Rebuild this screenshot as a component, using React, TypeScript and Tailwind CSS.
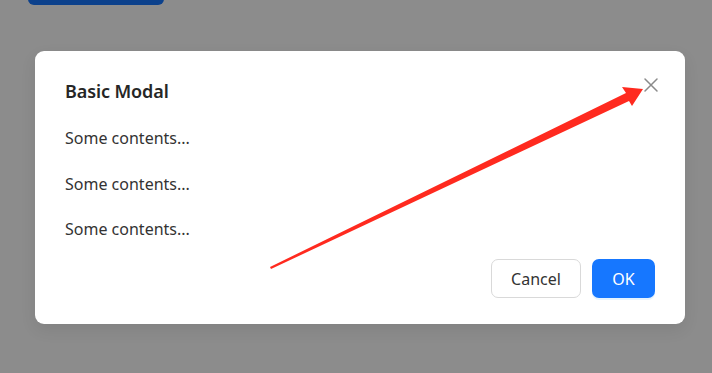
import React from "react";

export default function App() {
  return (
    <div
      className="relative w-[712px] h-[373px] overflow-hidden bg-[#8c8c8c]"
      style={{ fontFamily: '"Noto Sans", "Open Sans", sans-serif' }}
    >
      <div className="absolute left-[28px] top-[-30px] w-[136px] h-[35px] rounded-[6px] bg-[#0c418c]" />
      <div className="absolute left-[35px] top-[51px] w-[650px] h-[273px] rounded-[9px] bg-white shadow-[0_6px_16px_rgba(0,0,0,0.08)] flex flex-col px-[30px] pt-[26px] pb-[26px]">
        <div className="flex items-start justify-between">
          <div className="text-[18px] font-semibold text-[#262626] leading-[28px] tracking-[-0.1px]">Basic Modal</div>
          <svg className="mt-[0px] mr-[-4px]" width="16" height="16" viewBox="0 0 16 16">
            <path d="M2 2 L14 14 M14 2 L2 14" stroke="#8a8a8a" strokeWidth="1.5" strokeLinecap="round" />
          </svg>
        </div>
        <div className="mt-[21px] flex flex-col gap-[20.5px] text-[16px] leading-[25px] text-[#333]">
          <p>Some contents...</p>
          <p>Some contents...</p>
          <p>Some contents...</p>
        </div>
        <div className="mt-auto flex justify-end gap-[11px]">
          <button className="h-[39px] w-[90px] rounded-[7px] border border-[#d9d9d9] bg-white text-[16px] text-[#333]">Cancel</button>
          <button className="h-[39px] w-[63px] rounded-[7px] bg-[#1677ff] text-[16px] text-white shadow-[0_2px_0_rgba(5,145,255,0.1)]">OK</button>
        </div>
      </div>
      <svg className="absolute left-0 top-0 pointer-events-none" width="712" height="373" viewBox="0 0 712 373">
        <polygon
          points="270,267 626,93 622,87 643,89 632,106 629,101 271,269"
          fill="#ff2a1f"
        />
      </svg>
    </div>
  );
}
